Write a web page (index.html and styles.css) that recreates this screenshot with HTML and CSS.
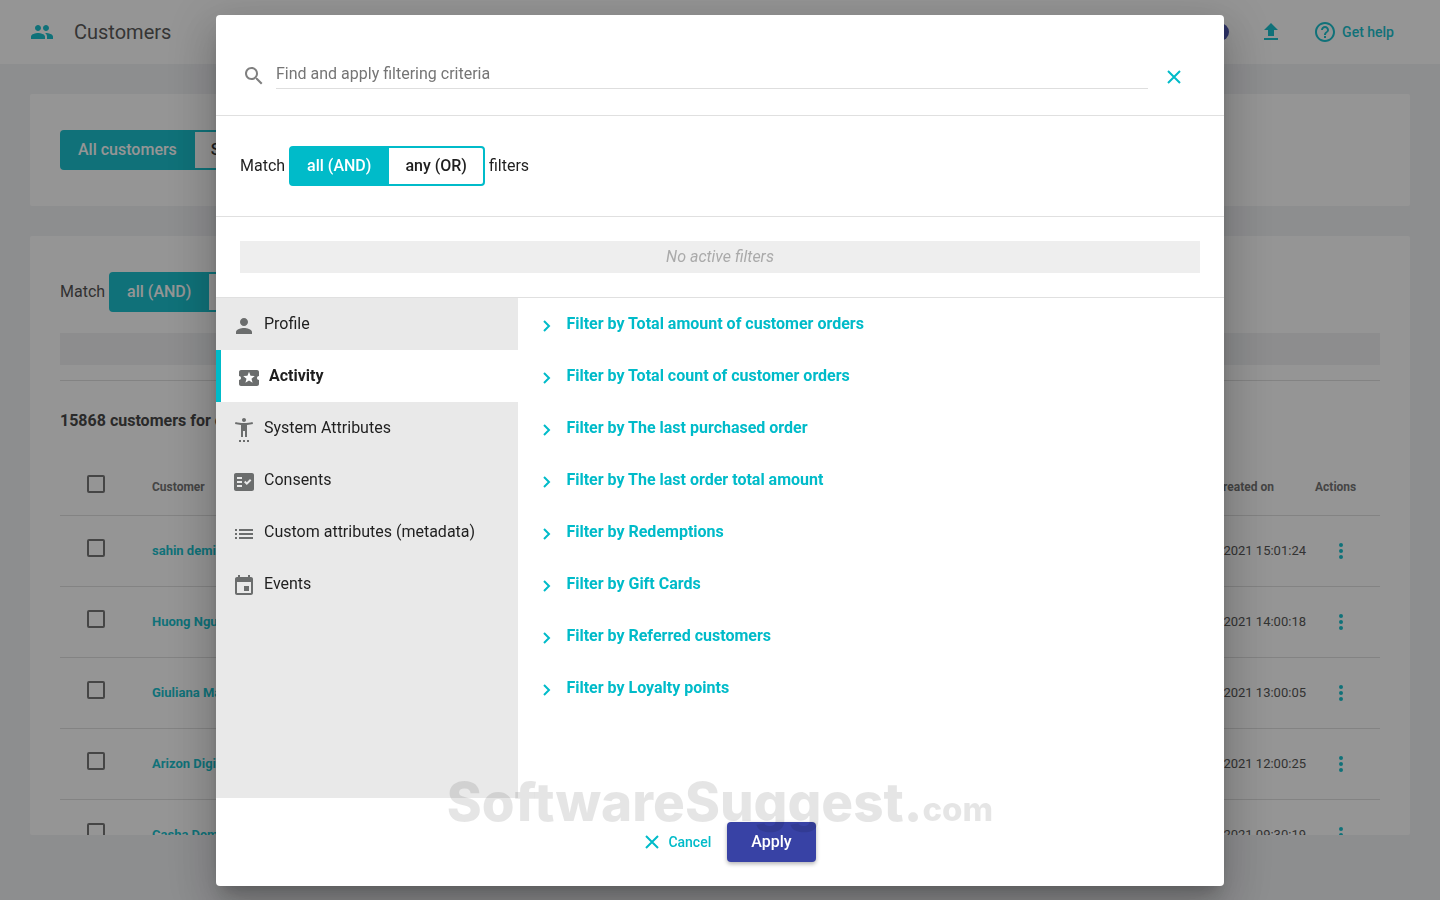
FILE: index.html
```html
<!DOCTYPE html>
<html lang="en">
<head>
<meta charset="utf-8">
<title>Customers</title>
<link rel="stylesheet" href="styles.css">
</head>
<body>
<div class="page">
  <header class="topbar">
    <svg class="icon topbar-logo" viewBox="0 0 24 24"><path d="M16 11c1.660 0 2.990-1.340 2.990-3S17.660 5 16 5s-3 1.340-3 3 1.340 3 3 3zm-8 0c1.660 0 2.990-1.340 2.990-3S9.660 5 8 5 5 6.340 5 8s1.340 3 3 3zm0 2c-2.330 0-7 1.170-7 3.500V19h14v-2.500c0-2.330-4.670-3.500-7-3.500zm8 0c-.290 0-.620.020-.970.050 1.160.840 1.970 1.970 1.970 3.450V19h6v-2.500c0-2.330-4.670-3.500-7-3.500z"/></svg>
    <h1 class="title">Customers</h1>
    <span class="badge"></span>
    <button class="top-button" aria-label="Import"><svg class="icon" viewBox="0 0 24 24"><path d="M5 18h14v2H5zM9 16h6v-6h4l-7-7-7 7h4z"/></svg></button>
    <a class="help" href="#help"><svg class="icon" viewBox="0 0 24 24"><path d="M11 18h2v-2h-2v2zm1-16C6.480 2 2 6.480 2 12s4.480 10 10 10 10-4.480 10-10S17.520 2 12 2zm0 18c-4.410 0-8-3.590-8-8s3.590-8 8-8 8 3.590 8 8-3.590 8-8 8zm0-14c-2.210 0-4 1.790-4 4h2c0-1.100.900-2 2-2s2 .900 2 2c0 2-3 1.750-3 5h2c0-2.250 3-2.500 3-5 0-2.210-1.790-4-4-4z"/></svg>Get help</a>
  </header>
  <main class="main">
    <section class="card card-tabs">
      <div class="toggle"><button class="toggle-item on">All customers</button><button class="toggle-item">Segments</button></div>
    </section>
    <section class="card card-list">
      <div class="match match-list"><span>Match</span><div class="toggle"><button class="toggle-item on">all (AND)</button><button class="toggle-item">any (OR)</button></div><span>filters</span></div>
      <div class="list-empty"></div>
      <h2 class="count">15868 customers for current filters</h2>
      <table class="table">
        <thead><tr><th class="c-check"><input type="checkbox" aria-label="Select all"></th><th>Customer</th><th class="c-date">Created on</th><th class="c-act">Actions</th></tr></thead>
        <tbody>
          <tr><td class="c-check"><input type="checkbox" aria-label="Select sahin demi"></td><td><a href="#c1">sahin demi</a></td><td class="c-date">2021 15:01:24</td><td class="c-act"><button class="more" aria-label="More"><svg class="icon" viewBox="0 0 24 24"><circle cx="12" cy="6" r="2"/><circle cx="12" cy="12" r="2"/><circle cx="12" cy="18" r="2"/></svg></button></td></tr>
          <tr><td class="c-check"><input type="checkbox" aria-label="Select Huong Ngu"></td><td><a href="#c2">Huong Ngu</a></td><td class="c-date">2021 14:00:18</td><td class="c-act"><button class="more" aria-label="More"><svg class="icon" viewBox="0 0 24 24"><circle cx="12" cy="6" r="2"/><circle cx="12" cy="12" r="2"/><circle cx="12" cy="18" r="2"/></svg></button></td></tr>
          <tr><td class="c-check"><input type="checkbox" aria-label="Select Giuliana Ma"></td><td><a href="#c3">Giuliana Ma</a></td><td class="c-date">2021 13:00:05</td><td class="c-act"><button class="more" aria-label="More"><svg class="icon" viewBox="0 0 24 24"><circle cx="12" cy="6" r="2"/><circle cx="12" cy="12" r="2"/><circle cx="12" cy="18" r="2"/></svg></button></td></tr>
          <tr><td class="c-check"><input type="checkbox" aria-label="Select Arizon Digi"></td><td><a href="#c4">Arizon Digi</a></td><td class="c-date">2021 12:00:25</td><td class="c-act"><button class="more" aria-label="More"><svg class="icon" viewBox="0 0 24 24"><circle cx="12" cy="6" r="2"/><circle cx="12" cy="12" r="2"/><circle cx="12" cy="18" r="2"/></svg></button></td></tr>
          <tr><td class="c-check"><input type="checkbox" aria-label="Select Casha Dem"></td><td><a href="#c5">Casha Dem</a></td><td class="c-date">2021 09:30:19</td><td class="c-act"><button class="more" aria-label="More"><svg class="icon" viewBox="0 0 24 24"><circle cx="12" cy="6" r="2"/><circle cx="12" cy="12" r="2"/><circle cx="12" cy="18" r="2"/></svg></button></td></tr>
        </tbody>
      </table>
    </section>
  </main>
</div>

<div class="backdrop">
  <div class="dialog" role="dialog" aria-label="Filters">
    <div class="search">
      <svg class="icon search-icon" viewBox="0 0 24 24"><path d="M15.500 14h-.790l-.280-.270C15.410 12.590 16 11.110 16 9.500 16 5.910 13.090 3 9.500 3S3 5.910 3 9.500 5.910 16 9.500 16c1.610 0 3.090-.590 4.230-1.570l.270.280v.790l5 4.990L20.490 19l-4.990-5zm-6 0C7.010 14 5 11.990 5 9.500S7.010 5 9.500 5 14 7.010 14 9.500 11.990 14 9.500 14z"/></svg>
      <input class="search-input" type="text" aria-label="Find and apply filtering criteria" placeholder="Find and apply filtering criteria">
      <button class="close" aria-label="Close"><svg class="cross" viewBox="0 0 16 16"><path d="M2 2l12 12M14 2L2 14"/></svg></button>
    </div>
    <div class="match match-dialog"><span>Match</span><div class="toggle"><button class="toggle-item on">all (AND)</button><button class="toggle-item">any (OR)</button></div><span>filters</span></div>
    <div class="active"><div class="active-empty">No active filters</div></div>
    <div class="body">
      <nav class="side">
        <a class="side-item" href="#profile"><svg class="icon" viewBox="0 0 24 24"><path d="M12 12c2.210 0 4-1.790 4-4s-1.790-4-4-4-4 1.790-4 4 1.790 4 4 4zm0 2c-2.670 0-8 1.340-8 4v2h16v-2c0-2.660-5.330-4-8-4z"/></svg>Profile</a>
        <a class="side-item current" href="#activity"><svg class="icon" viewBox="0 0 24 24"><path d="M20 12c0-1.100.900-2 2-2V6c0-1.100-.900-2-2-2H4c-1.100 0-1.990.900-1.990 2v4c1.100 0 1.990.900 1.990 2s-.890 2-2 2v4c0 1.100.900 2 2 2h16c1.100 0 2-.900 2-2v-4c-1.100 0-2-.900-2-2zm-4.420 4.800L12 14.500l-3.580 2.300 1.080-4.120-3.290-2.690 4.240-.250L12 5.800l1.540 3.950 4.240.250-3.290 2.690 1.090 4.110z"/></svg>Activity</a>
        <a class="side-item" href="#system"><svg class="icon" viewBox="0 0 24 24"><path d="M12 0c1.100 0 2 .900 2 2s-.900 2-2 2-2-.900-2-2 .900-2 2-2zm8.500 4c-2.610.700-5.670 1-8.500 1s-5.890-.300-8.500-1L3 6c1.860.500 4 .830 6 1v12h2v-6h2v6h2V7c2-.170 4.140-.500 6-1l-.500-2zM7 22h2v2H7zm4 0h2v2h-2zm4 0h2v2h-2z"/></svg>System Attributes</a>
        <a class="side-item" href="#consents"><svg class="icon" viewBox="0 0 24 24"><path fill-rule="evenodd" d="M20 3H4c-1.100 0-2 .900-2 2v14c0 1.100.900 2 2 2h16c1.100 0 2-.900 2-2V5c0-1.100-.900-2-2-2zM10 17H5v-2h5v2zm0-4H5v-2h5v2zm0-4H5V7h5v2zm4.820 6L12 12.160l1.410-1.410 1.410 1.420L17.990 9l1.420 1.420L14.820 15z"/></svg>Consents</a>
        <a class="side-item" href="#custom"><svg class="icon" viewBox="0 0 24 24"><path d="M3 7h2v2H3zm0 4h2v2H3zm0 4h2v2H3zM7 7h14v2H7zm0 4h14v2H7zm0 4h14v2H7z"/></svg>Custom attributes (metadata)</a>
        <a class="side-item" href="#events"><svg class="icon" viewBox="0 0 24 24"><path d="M17 12h-5v5h5v-5zM16 1v2H8V1H6v2H5c-1.110 0-1.990.900-1.990 2L3 19c0 1.100.890 2 2 2h14c1.100 0 2-.900 2-2V5c0-1.100-.900-2-2-2h-1V1h-2zm3 18H5V8h14v11z"/></svg>Events</a>
      </nav>
      <div class="filters">
        <button class="filter"><svg class="chevron" viewBox="0 0 8 12"><path d="M1 1l5 5-5 5"/></svg>Filter by Total amount of customer orders</button>
        <button class="filter"><svg class="chevron" viewBox="0 0 8 12"><path d="M1 1l5 5-5 5"/></svg>Filter by Total count of customer orders</button>
        <button class="filter"><svg class="chevron" viewBox="0 0 8 12"><path d="M1 1l5 5-5 5"/></svg>Filter by The last purchased order</button>
        <button class="filter"><svg class="chevron" viewBox="0 0 8 12"><path d="M1 1l5 5-5 5"/></svg>Filter by The last order total amount</button>
        <button class="filter"><svg class="chevron" viewBox="0 0 8 12"><path d="M1 1l5 5-5 5"/></svg>Filter by Redemptions</button>
        <button class="filter"><svg class="chevron" viewBox="0 0 8 12"><path d="M1 1l5 5-5 5"/></svg>Filter by Gift Cards</button>
        <button class="filter"><svg class="chevron" viewBox="0 0 8 12"><path d="M1 1l5 5-5 5"/></svg>Filter by Referred customers</button>
        <button class="filter"><svg class="chevron" viewBox="0 0 8 12"><path d="M1 1l5 5-5 5"/></svg>Filter by Loyalty points</button>
      </div>
    </div>
    <footer class="actions">
      <button class="cancel"><svg class="cross" viewBox="0 0 16 16"><path d="M2 2l12 12M14 2L2 14"/></svg>Cancel</button>
      <button class="apply">Apply</button>
    </footer>
    <div class="watermark">SoftwareSuggest.<span class="watermark-tld">com</span></div>
  </div>
</div>
</body>
</html>
```
FILE: styles.css
```css
* { box-sizing: border-box; }
body {
  margin: 0;
  font: 16px/24px Roboto, "Liberation Sans", sans-serif;
  color: #1f1f1f;
  background: #f0f1f4;
}
button { font: inherit; color: inherit; background: none; border: 0; padding: 0; }
a { text-decoration: none; color: #00bbc9; }
.icon { width: 24px; height: 24px; fill: currentColor; flex: none; display: block; }

.page { height: 100vh; overflow: hidden; }
.topbar {
  display: flex;
  align-items: center;
  height: 64px;
  padding: 0 46px 0 30px;
  background: #fff;
  color: #00bbc9;
}
.title { margin: 0 auto 0 20px; font-size: 20px; font-weight: 400; color: #484848; }
.badge { width: 18px; height: 18px; border-radius: 9px; background: #3842a5; }
.top-button { margin: 0 30px; }
.help { display: flex; align-items: center; gap: 5px; font-size: 14px; font-weight: 500; }
.main { padding: 30px; }
.card { background: #fff; border-radius: 2px; padding: 36px 30px; }
.card-tabs { margin-bottom: 30px; }
.card-list { height: 599px; overflow: hidden; }
.toggle { display: inline-flex; height: 40px; border: 2px solid #00bbc9; border-radius: 4px; }
.toggle-item { padding: 0 16px; font-weight: 500; }
.toggle-item.on { padding-right: 18px; color: #fff; background: #00bbc9; }
.match { display: flex; align-items: center; gap: 4px; }
.match-list { color: #404040; }
.list-empty { height: 32px; margin: 21px 0 15px; background: #eff0f2; }
.count { margin: 0; padding: 28px 0 26px; border-top: 1px solid #dcdcdc; font-size: 16px; font-weight: 700; color: #333; }
.table { width: 100%; border-collapse: collapse; font-size: 13px; line-height: 20px; color: #444; }
.table th, .table td { height: 71px; padding: 0; border-bottom: 1px solid #dcdcdc; text-align: left; }
.table th { height: 56px; font-size: 12px; font-weight: 700; color: #666; }
.table a { font-weight: 700; }
.table .c-check { width: 92px; padding: 0 0 6px 27px; vertical-align: middle; }
.table .c-date { width: 120px; text-align: right; }
.table thead .c-date { padding-right: 32px; }
.table .c-act { width: 74px; padding-left: 9px; }
.table td.c-act { padding-left: 23px; }
.table input { appearance: none; display: block; width: 18px; height: 18px; margin: 0; border: 2px solid #666; border-radius: 2px; }
.more { display: block; color: #00bbc9; }

.backdrop {
  position: fixed;
  inset: 0;
  display: flex;
  align-items: center;
  justify-content: center;
  background: rgba(33, 33, 33, .48);
}
.dialog {
  position: relative;
  width: 70%;
  border-radius: 4px;
  background: #fff;
  box-shadow: 0 11px 15px -7px rgba(0,0,0,.2), 0 24px 38px 3px rgba(0,0,0,.14), 0 9px 46px 8px rgba(0,0,0,.12);
}
.search { display: flex; align-items: center; padding: 44px 40px 26px 26px; border-bottom: 1px solid #e0e0e0; }
.search-icon { margin-top: 4px; color: #808080; }
.search-input {
  flex: 1;
  height: 30px;
  margin: 0 16px 0 10px;
  padding: 0;
  border: 0;
  border-bottom: 1px solid #dedede;
  font: inherit;
}
.search-input::placeholder { color: #757575; }
.close { color: #00bbc9; padding: 6px 2px 0; }
.cross { width: 16px; height: 16px; fill: none; stroke: currentColor; stroke-width: 2; display: block; }
.match-dialog { padding: 30px 24px; border-bottom: 1px solid #e0e0e0; }
.active { padding: 24px; border-bottom: 1px solid #e0e0e0; }
.active-empty { background: #eee; color: #aaa; font-style: italic; text-align: center; line-height: 32px; }
.body { display: flex; min-height: 500px; }
.side { width: 30%; background: #e9e9e9; }
.side-item { display: flex; align-items: center; gap: 8px; height: 52px; padding: 0 16px; color: #1f1f1f; }
.side-item .icon { color: #6b6d6d; margin-top: 4px; }
.side-item.current { border-left: 5px solid #00bbc9; background: #fff; font-weight: 700; }
.filters { flex: 1; padding-left: 25px; }
.filter { display: flex; align-items: center; gap: 15px; height: 52px; color: #00bbc9; font-weight: 700; }
.chevron { width: 8px; height: 12px; margin-top: 4px; fill: none; stroke: currentColor; stroke-width: 2; }
.actions { display: flex; align-items: center; justify-content: center; gap: 16px; padding: 24px 24px 24px 44px; }
.cancel { display: flex; align-items: center; gap: 8px; color: #00bbc9; font-size: 14px; font-weight: 500; }
.apply { height: 40px; padding: 0 24px; border-radius: 4px; background: #3842a5; color: #fff; font-weight: 500; box-shadow: 0 2px 4px rgba(0,0,0,.3); }
.watermark {
  position: absolute;
  left: 0;
  right: 0;
  bottom: 45px;
  text-align: center;
  font: 800 53px/64px Inter, sans-serif;
  color: rgba(0,0,0,.1);
  pointer-events: none;
}
.watermark-tld { font-size: 33px; }
```
